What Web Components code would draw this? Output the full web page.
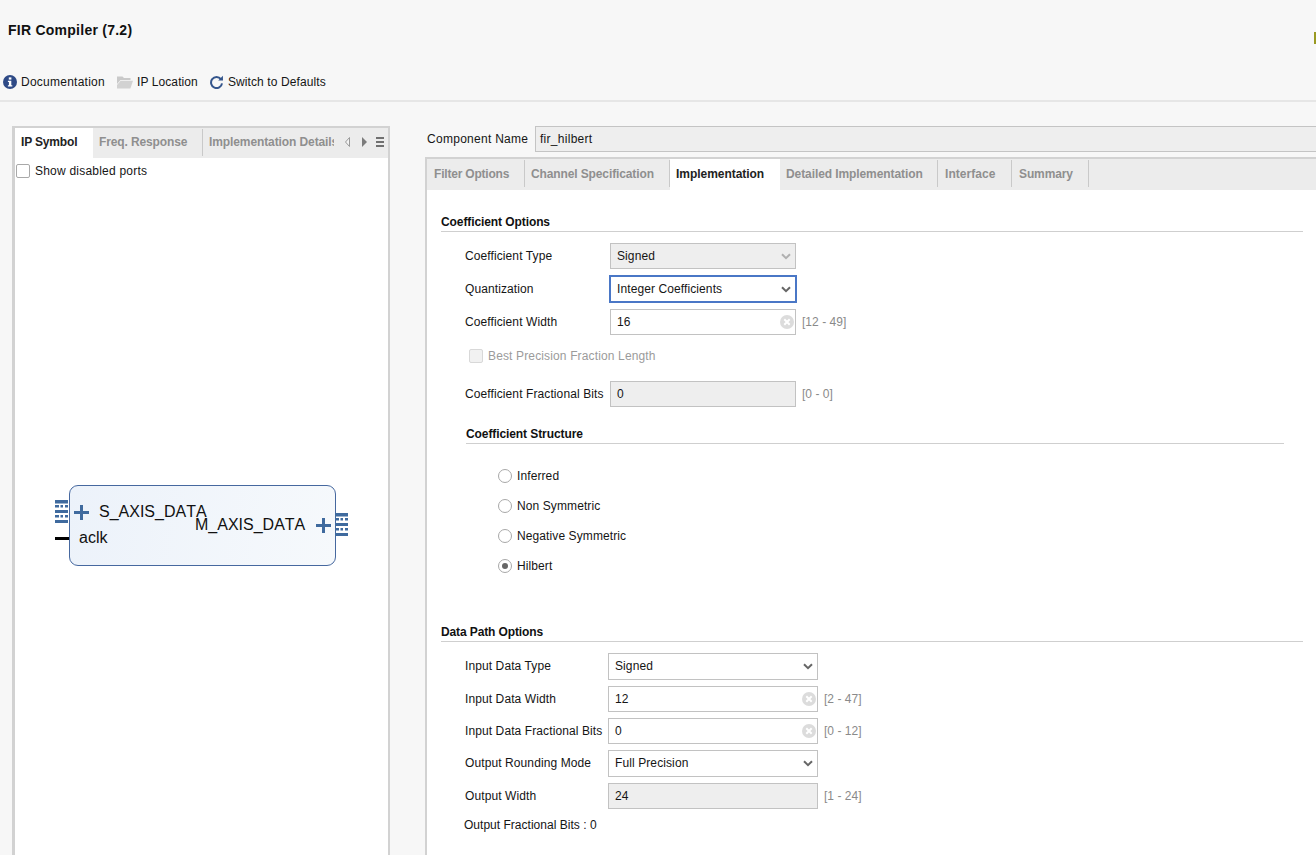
<!DOCTYPE html>
<html><head><meta charset="utf-8"><title>FIR Compiler</title>
<style>
html,body{margin:0;height:855px;overflow:hidden;background:#f7f7f7;font:12px/16px "Liberation Sans",Arial,sans-serif;color:#151515}
</style></head><body>
<ip-dialog>
  <ip-header title-text="FIR Compiler (7.2)"></ip-header>
  <ip-main>
    <ip-panel slot="left">
      <tab-strip kind="left">
        <x-tab active style="width:78px;letter-spacing:-.16px;line-height:28px">IP Symbol</x-tab>
        <x-tab style="width:110px;letter-spacing:-.12px;line-height:28px">Freq. Response</x-tab>
        <x-tab nodiv style="width:131px;letter-spacing:-.1px;line-height:28px">Implementation Details</x-tab>
      </tab-strip>
      <x-check style="margin:6px 0 0 1px;letter-spacing:.22px">Show disabled ports</x-check>
      <ip-symbol></ip-symbol>
    </ip-panel>
    <name-row slot="right" label="Component Name" value="fir_hilbert"></name-row>
    <ip-panel slot="right" kind="tabs">
      <tab-strip>
        <x-tab style="width:98px;--pad:7px;letter-spacing:-.2px">Filter Options</x-tab>
        <x-tab style="width:145px;--pad:6px;letter-spacing:-.12px">Channel Specification</x-tab>
        <x-tab active style="width:110px;letter-spacing:-.04px">Implementation</x-tab>
        <x-tab style="width:158px;letter-spacing:-.09px">Detailed Implementation</x-tab>
        <x-tab style="width:74px;--pad:7px;letter-spacing:.06px">Interface</x-tab>
        <x-tab style="width:77px;--pad:7px;letter-spacing:-.12px">Summary</x-tab>
      </tab-strip>
      <pane-body>
        <sec-title style="margin-top:24px;letter-spacing:-.09px">Coefficient Options</sec-title>
        <form-row label="Coefficient Type" lw="145" style="margin-top:11px"><x-select value="Signed" disabled></x-select></form-row>
        <form-row label="Quantization" lw="145" style="margin-top:7px"><x-select value="Integer Coefficients" focused></x-select></form-row>
        <form-row label="Coefficient Width" lw="145" style="margin-top:7px" range="[12 - 49]"><x-input value="16" clear></x-input></form-row>
        <x-check disabled style="margin:14px 0 0 28px;letter-spacing:.14px">Best Precision Fraction Length</x-check>
        <form-row label="Coefficient Fractional Bits" lw="145" style="margin-top:18px" range="[0 - 0]"><x-input value="0" disabled></x-input></form-row>
        <sec-title sub style="margin-top:18px;letter-spacing:-.09px">Coefficient Structure</sec-title>
        <radio-group style="margin-top:17px">
          <x-radio>Inferred</x-radio>
          <x-radio>Non Symmetric</x-radio>
          <x-radio>Negative Symmetric</x-radio>
          <x-radio checked>Hilbert</x-radio>
        </radio-group>
        <sec-title style="margin-top:43px;letter-spacing:-.12px">Data Path Options</sec-title>
        <form-row tall label="Input Data Type" lw="143" style="margin-top:11px"><x-select value="Signed" wide></x-select></form-row>
        <form-row label="Input Data Width" lw="143" style="margin-top:6px" range="[2 - 47]"><x-input value="12" clear wide></x-input></form-row>
        <form-row label="Input Data Fractional Bits" lw="143" style="margin-top:6px" range="[0 - 12]"><x-input value="0" clear wide></x-input></form-row>
        <form-row tall label="Output Rounding Mode" lw="143" style="margin-top:6px"><x-select value="Full Precision" wide></x-select></form-row>
        <form-row label="Output Width" lw="143" style="margin-top:6px" range="[1 - 24]"><x-input value="24" disabled wide></x-input></form-row>
        <plain-note style="margin-top:8px">Output Fractional Bits : 0</plain-note>
      </pane-body>
    </ip-panel>
  </ip-main>
</ip-dialog>
<script>
const LS='letter-spacing:.1px;';
function def(name, css, html){
  customElements.define(name, class extends HTMLElement{
    constructor(){super();this.attachShadow({mode:'open'});}
    connectedCallback(){
      const h=typeof html==='function'?html(this):html;
      this.shadowRoot.innerHTML='<style>'+css+'</style>'+h;
    }
  });
}
const esc=s=>(s||'');
def('ip-dialog',':host{display:block;width:1316px;height:855px;overflow:hidden}','<slot></slot>');
def('ip-header',`
:host{display:block;height:100px;border-bottom:2px solid #e6e6e6;box-sizing:content-box}
.top{display:flex;align-items:center;height:60px;padding-left:8px}
h1{margin:0;font:bold 14px/16px "Liberation Sans",Arial,sans-serif;color:#111;letter-spacing:.25px}
.mark{margin-left:auto;width:2px;height:12px;background:#9a9a22;margin-top:16px}
.bar{display:flex;align-items:center;height:16px;margin-top:14px;padding-left:3px}
.it{display:flex;align-items:center;gap:4px;margin-right:12px;white-space:nowrap}
svg{display:block;flex:none}
`,el=>`<div class="top"><h1>${esc(el.getAttribute('title-text'))}</h1><span class="mark"></span></div>
<div class="bar">
<span class="it" style="letter-spacing:.25px"><svg width="14" height="14" viewBox="0 0 14 14"><circle cx="7" cy="7" r="7" fill="#2e4a86"/><rect x="5.800" y="2.400" width="2.600" height="2.200" fill="#fff"/><path d="M4.900 5.700h3.400v4.600h1v1.300H4.900v-1.300h1V7H4.900z" fill="#fff"/></svg>Documentation</span>
<span class="it" style="letter-spacing:.1px"><svg width="16" height="14" viewBox="0 0 16 14"><path d="M0 1.500h5.500l1.500 1.500h6.500v2H3.500L0 9z" fill="#c9c9c9"/><path d="M0 13.500V10l3.600-4.200H16l-2.600 7.700z" fill="#d2d2d2"/></svg>IP Location</span>
<span class="it" style="gap:5px;letter-spacing:.1px"><svg width="13" height="14" viewBox="0 0 13 14"><path d="M10.900 4.200A5.500 5.500 0 1 0 12 8.400" fill="none" stroke="#34558c" stroke-width="2"/><path d="M8.200 5.400L13 5.600 12.900.8z" fill="#34558c"/></svg>Switch to Defaults</span>
</div>`);
def('ip-main',`
:host{display:flex;height:753px}
.l{display:block;width:378px;margin:24px 0 0 12px;height:729px}
.r{display:block;width:891px;margin:24px 0 0 35px}
`,`<div class="l"><slot name="left"></slot></div><div class="r"><slot name="right"></slot></div>`);
def('ip-panel',`
:host{display:block;box-sizing:border-box;background:#fff;border:solid #d2d2d2;border-width:2px 2px 0 3px;height:729px}
:host([kind=tabs]){border-width:2px 0 0 2px;margin-top:5px;height:698px}
`,'<slot></slot>');
def('tab-strip',`
:host{display:flex;height:31px;background:#ececec;overflow:hidden}
:host([kind=left]){height:30px}
.nav{display:flex;align-items:center;flex:none;width:54px;box-sizing:border-box;padding-right:3px}
svg{display:block}
`,el=>el.getAttribute('kind')==='left'?`<slot></slot><div class="nav"><svg width="51" height="30" viewBox="3 0 51 30"><path d="M18.500 9.500v9L14.500 14z" fill="#f4f4f4" stroke="#9a9a9a"/><path d="M31 9v10l5-5z" fill="#7c7c7c"/><path d="M45 9h8v2h-8zM45 13h8v2h-8zM45 17h8v2h-8z" fill="#707070"/></svg></div>`:'<slot></slot>');
def('x-tab',`
:host{display:block;flex:none;box-sizing:border-box;padding:0 0 0 var(--pad,6px);font:bold 12px/30px "Liberation Sans",Arial,sans-serif;color:#8f8f8f;white-space:nowrap;overflow:hidden;
background:linear-gradient(#c9c9c9,#c9c9c9) right 1px/1px 27px no-repeat}
:host([nodiv]){background:none}
:host([active]){background:#fff;color:#222}
`,'<slot></slot>');
def('x-check',`
:host{display:flex;align-items:center;height:14px;${LS}}
i{display:block;box-sizing:border-box;width:14px;height:14px;border:1px solid #a9a9a9;border-radius:2px;background:#fff;margin-right:5px}
:host([disabled]){color:#9b9b9b}
:host([disabled]) i{border-color:#d8d8d8;background:#f1f1f1}
`,'<i></i><slot></slot>');
def('name-row',`
:host{display:flex;align-items:center;height:26px;padding-left:2px;letter-spacing:.28px}
label{width:108px;flex:none}
div{flex:1;box-sizing:border-box;height:26px;background:#eee;border:1px solid #c4c4c4;border-right:0;padding:0 0 0 4px;line-height:24px}
`,el=>`<label>${esc(el.getAttribute('label'))}</label><div>${esc(el.getAttribute('value'))}</div>`);
def('pane-body',`:host{display:block;padding:0 13px 0 14px;background:#fff}`,'<slot></slot>');
def('sec-title',`
:host{display:block;box-sizing:border-box;height:18px;border-bottom:1px solid #cfcfcf;font:bold 12px/17px "Liberation Sans",Arial,sans-serif;color:#111}
:host([sub]){height:19px;margin-left:25px;margin-right:19px;line-height:18px}
`,'<slot></slot>');
def('form-row',`
:host{display:flex;align-items:center;height:26px;margin-left:24px;${LS}}
:host([tall]){height:27px}
:host([tall]) label{margin-bottom:2px}
label{flex:none;white-space:nowrap}
.r{margin-left:6px;color:#8a8a8a;white-space:nowrap;letter-spacing:.04px}
`,el=>`<label style="width:${el.getAttribute('lw')}px">${esc(el.getAttribute('label'))}</label><slot></slot>${el.getAttribute('range')?`<span class="r">${el.getAttribute('range')}</span>`:''}`);
const boxCss=`
:host{display:flex;align-items:center;box-sizing:border-box;width:186px;height:100%;background:#fff;border:1px solid #c2c2c2;padding:0 6px}
:host([wide]){width:210px}
:host([disabled]){background:#eee}
:host([focused]){border-color:#4a77c6;box-shadow:0 0 0 1px #4a77c6}
span{flex:1;white-space:nowrap}
:host([wide]) span{margin-bottom:1px}
svg{display:block;flex:none}
`;
def('x-select',boxCss,el=>`<span>${esc(el.getAttribute('value'))}</span><svg width="10" height="7" viewBox="0 0 10 7" style="margin-right:-2px"><path d="M1 1.200l4 4 4-4" fill="none" stroke="${el.hasAttribute('disabled')?'#b0b0b0':'#666'}" stroke-width="2"/></svg>`);
def('x-input',boxCss,el=>`<span>${esc(el.getAttribute('value'))}</span>${el.hasAttribute('clear')?`<svg width="14" height="14" viewBox="0 0 14 14" style="margin-right:-5px"><circle cx="7" cy="7" r="7" fill="#dcdcdc"/><path d="M4.300 4.300l5.400 5.400M9.700 4.300l-5.400 5.400" stroke="#fff" stroke-width="2"/></svg>`:''}`);
def('radio-group',`:host{display:block;margin-left:57px}`,'<slot></slot>');
def('x-radio',`
:host{display:flex;align-items:center;height:30px;${LS}}
i{display:flex;align-items:center;justify-content:center;box-sizing:border-box;width:14px;height:14px;border:1px solid #a8a8a8;border-radius:50%;background:#fff;margin-right:5px}
b{display:block;width:6px;height:6px;border-radius:50%;background:#666}
`,el=>`<i>${el.hasAttribute('checked')?'<b></b>':''}</i><slot></slot>`);
def('plain-note',`:host{display:block;margin-left:23px;line-height:16px;letter-spacing:.02px}`,'<slot></slot>');
const bus=`<path d="M0 0h13v3.500H0zM0 10h13v3H0zM0 20h13v3H0zM0 5h4v2.500H0zM5.500 5h2.500v2.500H5.500zM10 5h3v2.500h-3zM0 15h4v2.500H0zM5.500 15h2.500v2.500H5.500zM10 15h3v2.500h-3z" fill="#3f6a9e"/>`;
const plus=`<path d="M6 0h3v6h6v3H9v6H6V9H0V6h6z" fill="#3f6a9e"/>`;
def('ip-symbol',`
:host{display:block;position:relative;height:680px}
.blk{position:absolute;left:54px;top:307px;box-sizing:border-box;width:267px;height:81px;border:1px solid #46689f;border-radius:9px;background:linear-gradient(100deg,#ecf2fa,#f6f9fc)}
svg{position:absolute;display:block}
span{position:absolute;font:16px/18px "Liberation Sans",Arial,sans-serif;font-kerning:none;color:#111;white-space:nowrap}
`,`<div class="blk"></div>
<svg style="left:40px;top:322px" width="13" height="23" viewBox="0 0 13 23">${bus}</svg>
<svg style="left:59px;top:327px" width="15" height="15" viewBox="0 0 15 15">${plus}</svg>
<svg style="left:40px;top:359px" width="14" height="3" viewBox="0 0 14 3"><rect width="14" height="3" fill="#000"/></svg>
<span style="left:84px;top:325px">S_AXIS_DATA</span>
<span style="left:64px;top:351px">aclk</span>
<span style="left:180px;top:338px">M_AXIS_DATA</span>
<svg style="left:301px;top:340px" width="15" height="15" viewBox="0 0 15 15">${plus}</svg>
<svg style="left:320px;top:335px" width="13" height="23" viewBox="0 0 13 23">${bus}</svg>`);
</script>
</body></html>
